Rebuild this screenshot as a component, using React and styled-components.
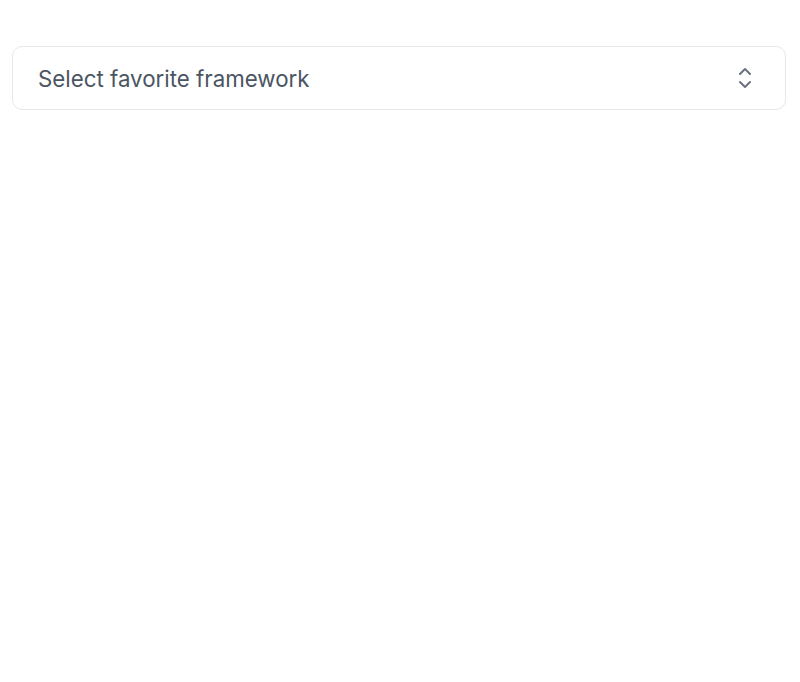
import styled, { createGlobalStyle } from 'styled-components';

const GlobalStyle = createGlobalStyle`
  body {
    margin: 0;
    background: #ffffff;
    font-family: Inter, "Noto Sans", sans-serif;
  }
`

const Page = styled.div`
  padding: 46px 14px 0 12px;
`

const SelectButton = styled.button`
  width: 100%;
  height: 64px;
  display: flex;
  align-items: center;
  justify-content: space-between;
  padding: 0 24px 0 25px;
  box-sizing: border-box;
  background: #ffffff;
  border: 1px solid #e5e7eb;
  border-radius: 10px;
  font-family: Inter, sans-serif;
  font-size: 22.3px;
  color: #4b5563;
  cursor: pointer;
  text-align: left;
`

const Placeholder = styled.span`
  letter-spacing: 0;
`

const ChevronIcon = () => (
  <svg width="32" height="32" viewBox="0 0 24 24" fill="none" stroke="#6b7280" strokeWidth="1.5" strokeLinecap="round" strokeLinejoin="round">
    <path d="M8.25 15 12 18.75 15.75 15m-7.5-6L12 5.25 15.75 9" />
  </svg>
)

function App() {
  return (
    <Page>
      <GlobalStyle />
      <SelectButton>
        <Placeholder>Select favorite framework</Placeholder>
        <ChevronIcon />
      </SelectButton>
    </Page>
  );
}

export default App;
